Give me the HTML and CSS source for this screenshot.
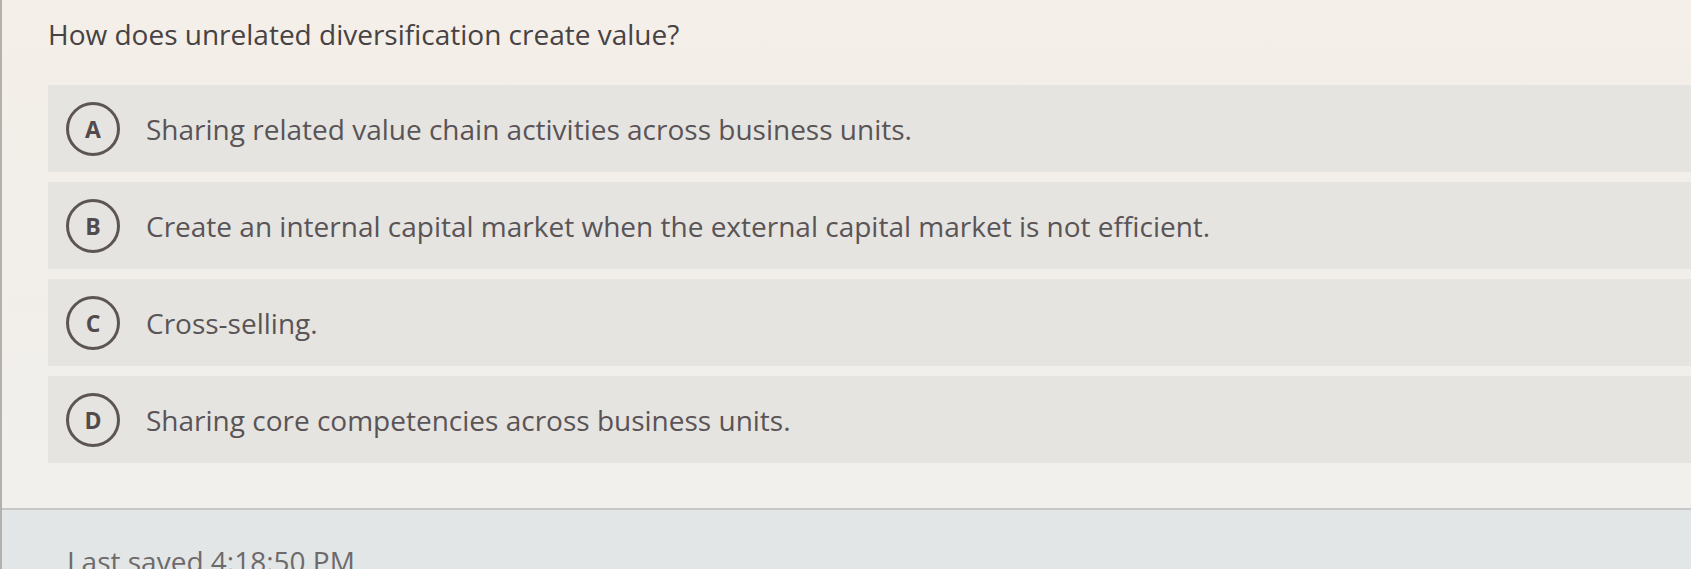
FILE: index.html
```html
<!DOCTYPE html>
<html lang="en">
<head>
<meta charset="utf-8">
<title>Question</title>
<link rel="stylesheet" href="styles.css">
</head>
<body>
<div class="page">
  <section class="card">
    <h1 class="question">How does unrelated diversification create value?</h1>
    <ul class="options">
      <li class="option"><span class="badge">A</span><span class="label">Sharing related value chain activities across business units.</span></li>
      <li class="option"><span class="badge">B</span><span class="label">Create an internal capital market when the external capital market is not efficient.</span></li>
      <li class="option"><span class="badge">C</span><span class="label">Cross-selling.</span></li>
      <li class="option"><span class="badge">D</span><span class="label">Sharing core competencies across business units.</span></li>
    </ul>
  </section>
  <footer class="footer">
    <span class="saved">Last saved 4:18:50 PM</span>
  </footer>
</div>
</body>
</html>
```

FILE: styles.css
```css
html, body {
  margin: 0;
  padding: 0;
}
body {
  background: #e3e6e7;
  font-family: "Open Sans", "Noto Sans", sans-serif;
  overflow: hidden;
}
.page {
  border-left: 2px solid #b3b0ae;
  min-height: 569px;
  box-sizing: border-box;
}
.card {
  background: linear-gradient(180deg, #f4efe8 0%, #f2eee9 40%, #f1f0ed 100%);
  padding: 17px 0 45px 46px;
  border-bottom: 2px solid #c6c8ca;
}
.question {
  margin: 0;
  font-size: 28px;
  line-height: 34px;
  font-weight: 400;
  color: #474243;
}
.options {
  list-style: none;
  margin: 34px 0 0;
  padding: 0;
  display: flex;
  flex-direction: column;
  gap: 10px;
}
.option {
  height: 87px;
  background: #e5e4e1;
  display: flex;
  align-items: center;
  padding-left: 18px;
}
.badge {
  width: 48px;
  height: 48px;
  border: 3px solid #5d5456;
  border-radius: 50%;
  display: flex;
  align-items: center;
  justify-content: center;
  font-size: 23px;
  font-weight: 700;
  color: #524a4c;
  margin-right: 26px;
  flex: none;
}
.label {
  font-size: 28px;
  font-weight: 400;
  color: #5a5456;
  line-height: 34px;
}
.footer {
  padding: 36px 0 0 65px;
}
.saved {
  font-size: 28px;
  color: #6e6a6b;
  line-height: 30px;
}
```
